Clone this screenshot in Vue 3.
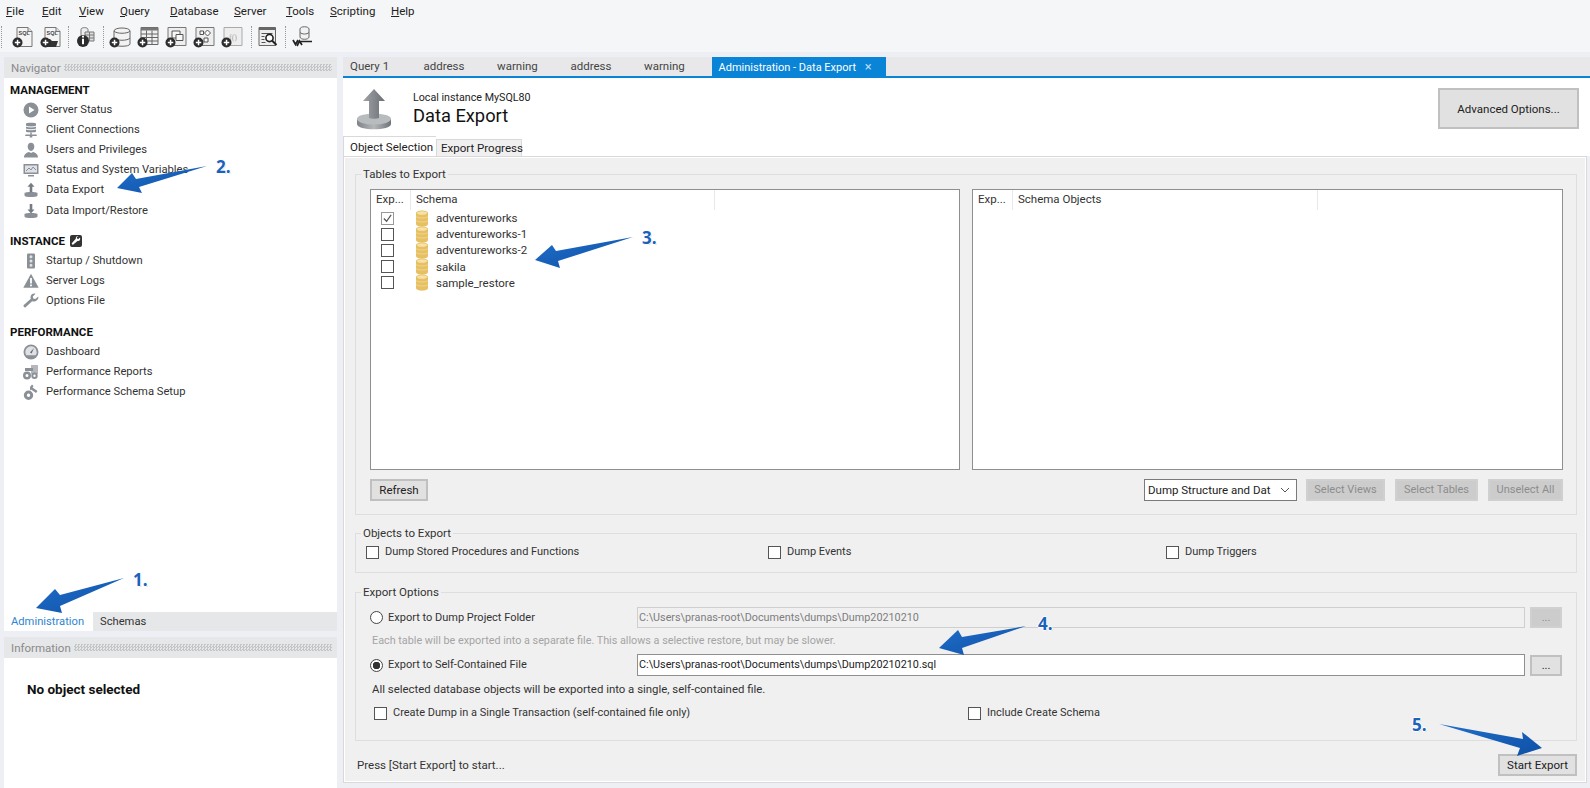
<script setup>
const menus = [['File', 'f1'], ['Edit', 'f2'], ['View', 'f3'], ['Query', 'f4'], ['Database', 'f5'], ['Server', 'f6'], ['Tools', 'f7'], ['Scripting', 'f8'], ['Help', 'f9']]

const G = '#8b9097'
const icons = {
  status: [['M8 .5a7.5 7.5 0 1 0 0 15 7.5 7.5 0 0 0 0-15z', G], ['M6 4.5v7l5.5-3.5z', '#fff']],
  conn: [['M3 1.5C3 .5 13 .5 13 1.5v8c0 1.2-10 1.2-10 0z', G], ['M3 4.2c2 1 8 1 10 0M3 7c2 1 8 1 10 0', 'none', '#fff'], ['M7.3 10.5h1.4v2h5v1.4h-4.4v1.6H6.7v-1.6H2.300v-1.400h5z', G]],
  user: [['M8 .8c2 0 3.300 1.500 3.300 3.700S10 9 8 9 4.700 6.700 4.700 4.500 6 .8 8 .8z', G], ['M1 15.500c0-3.500 3-5 5-5.500l2 1 2-1c2 .5 5 2 5 5.500z', G]],
  vars: [['M.5 2h15v10H.5z', G], ['M2 3.500h12v7H2z', '#dfe1e4'], ['M3 9l3-3 2 2 2-3 3 3', 'none', G], ['M5 13h6v1.500H5z', G]],
  exp: [['M1.500 11c0-1.500 13-1.500 13 0v2.500c0 2-13 2-13 0z', G], ['M8 .8l3.500 4h-2.200v5.400H6.700V4.800H4.500z', '#777b82']],
  imp: [['M1.500 11c0-1.500 13-1.500 13 0v2.500c0 2-13 2-13 0z', G], ['M8 10.400l3.500-4H9.300V1H6.700v5.400H4.500z', '#777b82']],
  start: [['M5 .5h6a1 1 0 0 1 1 1v13a1 1 0 0 1-1 1H5a1 1 0 0 1-1-1v-13a1 1 0 0 1 1-1z', G], ['M8 2.200a1.500 1.500 0 1 0 0 3 1.500 1.500 0 0 0 0-3zM8 6.500a1.500 1.500 0 1 0 0 3 1.500 1.500 0 0 0 0-3zM8 10.800a1.500 1.500 0 1 0 0 3 1.500 1.500 0 0 0 0-3z', '#dfe1e4']],
  logs: [['M8 .8l7.700 14H.3z', G], ['M7.100 5h1.800v5.500H7.100zM7.100 11.500h1.800v1.700H7.100z', '#fff']],
  wrench: [['M15.300 3.500l-3 2.500-2-.6-.5-2 2.700-2.700c-2.500-.8-5 1-5 3.400 0 .6 0 1.100.3 1.600L.8 12c-1 1 .5 3 1.800 2.200l6.500-6c2.800 1.200 6.800-1 6.200-4.700z', G]],
  dash: [['M8 .5a7.500 7.500 0 1 0 0 15 7.500 7.500 0 0 0 0-15z', G], ['M8 2.300a5.700 5.700 0 0 0-5.700 5.700c0 1.300.4 2.400 1.100 3.300h9.200A5.700 5.700 0 0 0 8 2.300z', '#dfe1e4'], ['M7 8.500L11 4l-2.400 5.400z', '#666a70']],
  reports: [['M8 1h7v9H8z', '#b4b7bc'], ['M2 4h8v3H2z', G], ['M4 7.500a4 4 0 1 0 0 8 4 4 0 0 0 0-8zM11.500 8.500a3.200 3.200 0 1 0 0 6.400 3.200 3.200 0 0 0 0-6.400z', G], ['M4 10a1.500 1.500 0 1 0 0 3 1.500 1.500 0 0 0 0-3zM11.500 10.500a1.200 1.200 0 1 0 0 2.400 1.200 1.200 0 0 0 0-2.400z', '#fff']],
  setup: [['M5.500 6.500a4.700 4.700 0 1 0 0 9.400 4.700 4.700 0 0 0 0-9.400z', G], ['M5.500 9.500a1.700 1.700 0 1 0 0 3.400 1.700 1.700 0 0 0 0-3.400z', '#fff'], ['M7 3l2-2.500 1.500 1.500-1 1.500 5 3.500-1.500 2-5-3.500-1 1z', G]],
}

const sections = [
  { title: 'MANAGEMENT', items: [['status', 'Server Status'], ['conn', 'Client Connections'], ['user', 'Users and Privileges'], ['vars', 'Status and System Variables'], ['exp', 'Data Export'], ['imp', 'Data Import/Restore']] },
  { title: 'INSTANCE', badge: true, items: [['start', 'Startup / Shutdown'], ['logs', 'Server Logs'], ['wrench', 'Options File']] },
  { title: 'PERFORMANCE', items: [['dash', 'Dashboard'], ['reports', 'Performance Reports'], ['setup', 'Performance Schema Setup']] },
]

// toolbar: groups split by a dotted separator
const toolbar = [
  ['sql', 'sqlopen'],
  ['info'],
  ['db', 'table', 'view', 'proc', 'func'],
  ['search'],
  ['reconnect'],
]
const withPlus = ['sql', 'sqlopen', 'db', 'table', 'view', 'proc', 'func']

const tabs = ['Query 1', 'address', 'warning', 'address', 'warning']
const schemas = ['adventureworks', 'adventureworks-1', 'adventureworks-2', 'sakila', 'sample_restore']

const arrows = [
  '124,578 60,595 55,589 36,608 62,613 60,606',
  '207,166 136,179 132,173 117,188 142,193 139,187',
  '633,237 556,251 552,245 535,260 560,268 558,261',
  '1026,626 962,637 958,630 939,648 964,655 962,648',
  '1439,724 1523,739 1522,732 1542,748 1517,756 1520,748',
]
const callouts = [
  { n: '1.', cls: 'c1' },
  { n: '2.', cls: 'c2' },
  { n: '3.', cls: 'c3' },
  { n: '4.', cls: 'c4' },
  { n: '5.', cls: 'c5' },
]
</script>

<template>
  <div class="app">
    <div class="menubar">
      <span v-for="m in menus" :key="m[0]" class="menu" :class="m[1]"><u>{{ m[0][0] }}</u>{{ m[0].slice(1) }}</span>
    </div>

    <div class="toolbar">
      <div v-for="(group, i) in toolbar" :key="i" class="tool-group">
        <svg v-for="t in group" :key="t" class="tool" viewBox="0 0 22 22" width="22" height="22">
          <template v-if="t === 'sql' || t === 'sqlopen'">
            <path d="M5 1.500h11l4 4v15H5z" fill="#f4f4f4" stroke="#777" />
            <path d="M16 1.500v4h4" fill="#ddd" stroke="#777" />
            <text x="6.500" y="9" class="tool-txt">SQL</text>
            <path v-if="t === 'sqlopen'" d="M4 13h6l2 2h6l-2 6H4z" fill="#333" />
          </template>
          <template v-if="t === 'info'">
            <path d="M7 3.500c0-2.500 7-2.500 7 0v5c0 2.500-7 2.500-7 0z" fill="#eee" stroke="#777" />
            <path d="M11 6h9v9h-9zM11 9h9M11 12h9M15.500 6v9" fill="#ddd" stroke="#777" />
            <circle cx="9" cy="15" r="6" fill="#2c2c2c" />
            <path d="M8 9.800h2v1.800H8zM8 12.800h2v5.500H8z" fill="#fff" />
          </template>
          <template v-if="t === 'db'">
            <path d="M5 5c0-4 16-4 16 0v13c0 3-16 3-16 0z" fill="#f2f2f2" stroke="#666" />
            <path d="M5 5c2 3 14 3 16 0M5 12c2 3 14 3 16 0" fill="none" stroke="#666" />
          </template>
          <template v-if="t === 'table'">
            <path d="M4 1.500h17v17H4z" fill="#f0f0f0" stroke="#666" />
            <path d="M4 1.500h17v3H4z" fill="#777" />
            <path d="M4 8h17M4 11.500h17M4 15h17M9.500 4.500v14M15 4.500v14" stroke="#666" fill="none" />
          </template>
          <template v-if="t === 'view'">
            <path d="M3 1.500h18v18H3z" fill="#eee" stroke="#777" />
            <path d="M7 5h8v7H7z" fill="#f8f8f8" stroke="#555" />
            <path d="M11 8.500h7v6h-7z" fill="#f8f8f8" stroke="#555" />
          </template>
          <template v-if="t === 'proc'">
            <path d="M3 1.500h18v18H3z" fill="#eee" stroke="#777" />
            <path d="M7 5h3.500v3.500H7zM14.500 4l3 3-3 3-3-3zM11 12h4v4h-4z" fill="#f8f8f8" stroke="#555" />
          </template>
          <template v-if="t === 'func'">
            <path d="M3 1.500h18v18H3z" fill="#eee" stroke="#aaa" />
            <text x="8" y="13.500" class="tool-fn">f()</text>
          </template>
          <template v-if="t === 'search'">
            <path d="M2 1.500h16.500v18H2z" fill="#eee" stroke="#666" />
            <path d="M2 1.500h16.500v2.500H2z" fill="#666" />
            <path d="M4.500 7.500h11M4.500 10.500h3M4.500 13.500h3M4.500 16.500h4" stroke="#555" fill="none" />
            <circle cx="12.500" cy="12" r="3.600" fill="#fff" stroke="#222" stroke-width="1.600" />
            <path d="M15 14.500l4.500 4.500" stroke="#222" stroke-width="2" />
          </template>
          <template v-if="t === 'reconnect'">
            <path d="M9 3c0-3 9-3 9 0v8c0 3-9 3-9 0z" fill="#f2f2f2" stroke="#666" />
            <path d="M9 6.500c2 2 7 2 9 0" fill="none" stroke="#666" />
            <path d="M9 15.500h12M2 14l2.500 4.500L7 14M6 20l2.500-5 2.500 4" stroke="#222" stroke-width="1.700" fill="none" />
          </template>
          <template v-if="withPlus.includes(t)">
            <circle cx="5.500" cy="16.500" r="5" fill="#2c2c2c" />
            <path d="M2.800 15.700h2v-2h1.500v2h2v1.500h-2v2H4.800v-2h-2z" fill="#fff" />
          </template>
        </svg>
      </div>
    </div>

    <div class="main">
      <aside class="side">
        <div class="pane-head"><span>Navigator</span><i class="hatch"></i></div>
        <div class="nav">
          <section v-for="s in sections" :key="s.title" class="nav-sec">
            <h4 class="nav-title">
              {{ s.title }}
              <svg v-if="s.badge" class="nav-badge" viewBox="0 0 12 12" width="12" height="12">
                <rect width="12" height="12" rx="2" fill="#333" />
                <path d="M10 2.500L8.300 4 7 3.500l-.2-1.300L8.500 1C6.800.8 5.500 2 5.800 3.800L2 8c-.8.8.5 2.200 1.300 1.500L7.500 6c2 .6 3.200-1.300 2.500-3.500z" fill="#fff" />
              </svg>
            </h4>
            <div v-for="it in s.items" :key="it[1]" class="nav-item">
              <svg viewBox="0 0 16 16" width="16" height="16">
                <path v-for="(p, i) in icons[it[0]]" :key="i" :d="p[0]" :fill="p[1]" :stroke="p[2] || 'none'" />
              </svg>
              <span>{{ it[1] }}</span>
            </div>
          </section>
        </div>
        <div class="side-tabs">
          <span class="side-tab on">Administration</span>
          <span class="side-tab">Schemas</span>
        </div>
        <div class="pane-head info-head"><span>Information</span><i class="hatch"></i></div>
        <div class="info">No object selected</div>
      </aside>

      <div class="work">
        <div class="tabs">
          <span v-for="(t, i) in tabs" :key="i" class="tab">{{ t }}</span>
          <span class="tab active">Administration - Data Export <b class="x">×</b></span>
        </div>

        <header class="head">
          <svg class="head-icon" viewBox="0 0 36 42" width="36" height="42">
            <defs>
              <linearGradient id="disk" x1="0" x2="1" y1="0" y2="0">
                <stop offset="0" stop-color="#7f8388" />
                <stop offset=".5" stop-color="#b4b7ba" />
                <stop offset="1" stop-color="#6f7378" />
              </linearGradient>
              <linearGradient id="up" x1="0" x2="1" y1="0" y2="0">
                <stop offset="0" stop-color="#a0a3a6" />
                <stop offset="1" stop-color="#6b6f74" />
              </linearGradient>
            </defs>
            <path d="M1 32c0-7 34-7 34 0v4c0 7-34 7-34 0z" fill="url(#disk)" />
            <ellipse cx="18" cy="31" rx="17" ry="5.500" fill="#b9bcbf" />
            <path d="M18 1l11 12h-6v17c-2 1-8 1-10 0V13H7z" fill="url(#up)" />
          </svg>
          <div class="head-text">
            <div class="head-sub">Local instance MySQL80</div>
            <h1 class="head-title">Data Export</h1>
          </div>
          <button class="btn adv">Advanced Options...</button>
        </header>

        <div class="subtabs">
          <span class="subtab on">Object Selection</span>
          <span class="subtab">Export Progress</span>
        </div>

        <div class="panel">
          <fieldset class="group">
            <legend>Tables to Export</legend>
            <div class="lists">
              <div class="list">
                <div class="list-head">
                  <span class="col-a">Exp...</span><span class="col-b">Schema</span>
                </div>
                <div v-for="(s, i) in schemas" :key="s" class="row">
                  <span class="check in-list" :class="{ checked: i === 0 }">
                    <svg v-if="i === 0" viewBox="0 0 12 12" width="11" height="11">
                      <path d="M2 6l3 3 5-7" fill="none" stroke="#555" stroke-width="1.300" />
                    </svg>
                  </span>
                  <svg class="db" viewBox="0 0 14 17" width="14" height="17">
                    <path d="M1 3c0-3.500 12-3.500 12 0v11c0 3.500-12 3.500-12 0z" fill="#e6c063" />
                    <ellipse cx="7" cy="3" rx="5" ry="1.800" fill="#f5e2a8" />
                    <path d="M1 6.500c2 2 10 2 12 0M1 10.500c2 2 10 2 12 0" fill="none" stroke="#f3dc9c" stroke-width=".8" />
                  </svg>
                  <span>{{ s }}</span>
                </div>
              </div>
              <div class="list">
                <div class="list-head">
                  <span class="col-a">Exp...</span><span class="col-b wide">Schema Objects</span>
                </div>
              </div>
            </div>
            <div class="list-actions">
              <button class="btn refresh">Refresh</button>
              <div class="select">
                <span>Dump Structure and Dat</span>
                <svg viewBox="0 0 10 6" width="10" height="6"><path d="M1 1l4 4 4-4" fill="none" stroke="#555" /></svg>
              </div>
              <button class="btn off sv">Select Views</button>
              <button class="btn off st">Select Tables</button>
              <button class="btn off ua">Unselect All</button>
            </div>
          </fieldset>

          <fieldset class="group objects">
            <legend>Objects to Export</legend>
            <div class="obj-row">
              <label class="opt o1"><span class="check"></span>Dump Stored Procedures and Functions</label>
              <label class="opt o2"><span class="check"></span>Dump Events</label>
              <label class="opt"><span class="check"></span>Dump Triggers</label>
            </div>
          </fieldset>

          <fieldset class="group options">
            <legend>Export Options</legend>
            <div class="path-row">
              <label class="radio-label"><span class="radio"></span>Export to Dump Project Folder</label>
              <div class="path disabled">C:\Users\pranas-root\Documents\dumps\Dump20210210</div>
              <button class="btn off more">...</button>
            </div>
            <p class="hint muted">Each table will be exported into a separate file. This allows a selective restore, but may be slower.</p>
            <div class="path-row second">
              <label class="radio-label"><span class="radio sel"></span>Export to Self-Contained File</label>
              <div class="path">C:\Users\pranas-root\Documents\dumps\Dump20210210.sql</div>
              <button class="btn more">...</button>
            </div>
            <p class="hint">All selected database objects will be exported into a single, self-contained file.</p>
            <div class="obj-row last">
              <label class="opt o3"><span class="check"></span>Create Dump in a Single Transaction (self-contained file only)</label>
              <label class="opt"><span class="check"></span>Include Create Schema</label>
            </div>
          </fieldset>

          <div class="foot">
            <span>Press [Start Export] to start...</span>
            <button class="btn start">Start Export</button>
          </div>
        </div>
      </div>
    </div>

    <!-- tutorial annotations drawn on top of the window -->
    <svg class="marks" viewBox="0 0 1590 788" width="1590" height="788">
      <defs>
        <linearGradient id="arrow" x1="0" x2="1" y1="0" y2="1">
          <stop offset="0" stop-color="#1f6fc9" />
          <stop offset="1" stop-color="#0f4fa6" />
        </linearGradient>
      </defs>
      <polygon v-for="a in arrows" :key="a" :points="a" fill="url(#arrow)" />
    </svg>
    <span v-for="c in callouts" :key="c.n" class="callout" :class="c.cls">{{ c.n }}</span>
  </div>
</template>

<style>
html, body { margin: 0; background: #eeeff4; }
</style>

<style scoped>
.app {
  position: relative;
  width: 1590px;
  height: 788px;
  overflow: hidden;
  display: flex;
  flex-direction: column;
  background: #eeeff4;
  color: #222;
  font-family: Roboto, "Noto Sans", sans-serif;
  font-size: 11.500px;
  line-height: 14px;
}

.menubar {
  height: 21px;
  flex: none;
  display: flex;
  align-items: center;
  padding-left: 6px;
  background: #f5f6f7;
  font-size: 11.500px;
}
.f1 { width: 36px; }
.f2 { width: 37px; }
.f3 { width: 41px; }
.f4 { width: 50px; }
.f5 { width: 64px; }
.f6 { width: 52px; }
.f7 { width: 44px; }
.f8 { width: 61px; }

.toolbar {
  height: 31px;
  flex: none;
  display: flex;
  align-items: center;
  padding-left: 1px;
  background: #f5f6f7;
}
.tool-group {
  display: flex;
  gap: 6px;
  padding: 0 6px 0 5px;
  border-left: 1px dotted #999;
  height: 22px;
}
.tool-group:first-child { padding-left: 10px; }
.tool-group:nth-child(2) { padding-right: 7px; }
.tool-group:nth-child(3) { padding-right: 8px; }
.tool-txt { font: bold 5.500px "Liberation Sans", sans-serif; fill: #444; }
.tool-fn { font: 8px "Liberation Serif", serif; fill: #aaa; }

.main {
  flex: 1;
  min-height: 0;
  display: flex;
  padding-top: 5px;
}

.side {
  width: 333px;
  margin-left: 4px;
  flex: none;
  display: flex;
  flex-direction: column;
}
.pane-head {
  height: 21px;
  flex: none;
  display: flex;
  align-items: center;
  gap: 3px;
  padding: 0 5px 0 7px;
  background: #e6e7e9;
  color: #8a8a8a;
}
.hatch {
  flex: 1;
  height: 7px;
  background: repeating-conic-gradient(#c4c5c7 0 25%, transparent 0 50%) 0 0 / 3px 3px;
}
.nav {
  height: 534px;
  flex: none;
  padding: 1px 6px 0;
  background: #fff;
  box-sizing: border-box;
}
.nav-sec { margin-bottom: 9.600px; }
.nav-title {
  margin: 0;
  height: 21px;
  font-size: 11.500px;
  font-weight: 700;
  color: #111;
  display: flex;
  align-items: center;
  gap: 5px;
}
.nav-item {
  height: 20.100px;
  display: flex;
  align-items: center;
  gap: 7px;
  padding-left: 13px;
  color: #333;
  font-size: 11.200px;
}
.side-tabs {
  height: 19px;
  flex: none;
  display: flex;
  background: #e6e7e9;
  font-size: 11.200px;
}
.side-tab {
  display: flex;
  align-items: center;
  padding: 0 7px;
  color: #333;
}
.side-tab.on {
  width: 89px;
  box-sizing: border-box;
  background: #fff;
  color: #2f85cf;
}
.info-head { margin-top: 6px; }
.info {
  flex: 1;
  background: #fff;
  padding: 24px 23px 0;
  font-size: 13.500px;
  font-weight: 700;
  color: #111;
}

.work {
  flex: 1;
  min-width: 0;
  margin-left: 6px;
  display: flex;
  flex-direction: column;
}
.tabs {
  height: 19px;
  flex: none;
  display: flex;
  background: #e8e8ea;
  border-bottom: 2px solid #0a84d6;
}
.tab {
  width: 73.500px;
  box-sizing: border-box;
  padding-left: 7px;
  line-height: 19px;
  color: #444;
}
.tab.active {
  width: 174px;
  margin-left: 1px;
  background: #0a84d6;
  color: #fff;
  white-space: nowrap;
  font-size: 11px;
}
.x { font-weight: 400; font-size: 13px; margin-left: 6px; color: #b9dcf5; }

.head {
  height: 58px;
  box-sizing: border-box;
  flex: none;
  display: flex;
  align-items: center;
  background: #fff;
  padding: 3px 11px 0 13px;
}
.head-text { margin-left: 21px; flex: 1; }
.head-sub { line-height: 14px; font-size: 10.700px; }
.head-title {
  margin: 0;
  font-size: 18.300px;
  line-height: 22px;
  font-weight: 400;
  color: #111;
}
.btn {
  box-sizing: border-box;
  display: block;
  margin: 0;
  padding: 0;
  border: 2px solid #c0c0c0;
  background: #e1e1e1;
  color: #222;
  font: inherit;
  text-align: center;
}
.adv { width: 141px; height: 41px; }
.btn.off { background: #cccccc; border-color: #d0d0d0; color: #8c8c8c; font-size: 11px; }

.subtabs {
  height: 20px;
  flex: none;
  display: flex;
  align-items: flex-end;
  background: #fff;
}
.subtab {
  height: 17px;
  line-height: 17px;
  width: 86px;
  box-sizing: border-box;
  padding-left: 4px;
  background: #f0f0f0;
  border: 1px solid #d9d9d9;
  border-bottom: none;
  white-space: nowrap;
}
.subtab.on {
  width: 93px;
  height: 20px;
  line-height: 20px;
  padding-left: 6px;
  background: #fff;
  border-right: none;
}

.panel {
  height: 627px;
  flex: none;
  width: 1244px;
  box-sizing: border-box;
  padding: 10px 9px 0 11px;
  background: #f0f0f0;
  border: 1px solid #d9d9d9;
  box-shadow: inset 0 0 0 1px #fff;
}
.group {
  margin: 0;
  padding: 8px 13px 13px 14px;
  border: 1px solid #dedede;
  min-width: 0;
}
.group legend {
  padding: 0 2px;
  margin-left: -9px;
  line-height: 14px;
  color: #333;
}
.lists {
  display: grid;
  grid-template-columns: 590px 591px;
  gap: 12px;
}
.list {
  height: 281px;
  box-sizing: border-box;
  background: #fff;
  border: 1px solid #8f8f8f;
}
.list-head {
  display: flex;
  height: 20px;
  line-height: 19px;
  color: #333;
}
.col-a { width: 40px; box-sizing: border-box; padding-left: 5px; border-right: 1px solid #e8e8e8; flex: none; }
.col-b { width: 304px; box-sizing: border-box; padding-left: 5px; border-right: 1px solid #e8e8e8; flex: none; }
.col-b.wide { width: 305px; }
.row {
  height: 16.200px;
  display: flex;
  align-items: center;
  color: #333;
}
.check {
  width: 13px;
  height: 13px;
  box-sizing: border-box;
  border: 1px solid #555;
  background: #fff;
  display: inline-flex;
  align-items: center;
  justify-content: center;
  flex: none;
}
.check.in-list { margin: 0 21px 0 10px; }
.check.checked { border-color: #999; }
.db { margin-right: 7px; flex: none; }

.list-actions {
  display: flex;
  align-items: center;
  margin-top: 9px;
  height: 22px;
  color: #222;
}
.refresh { width: 58px; height: 22px; margin-right: auto; }
.select {
  width: 153px;
  height: 22px;
  box-sizing: border-box;
  border: 1px solid #7a7a7a;
  background: #fff;
  display: flex;
  align-items: center;
  justify-content: space-between;
  padding: 0 6px 0 3px;
  margin-right: 9px;
}
.sv { width: 79px; height: 22px; margin-right: 10px; }
.st { width: 83px; height: 22px; margin-right: 10px; }
.ua { width: 75px; height: 22px; }

.objects { margin-top: 11px; padding: 2px 10px 10px 10px; }
.objects legend { margin-left: -5px; }
.obj-row { display: flex; align-items: center; height: 20px; color: #333; font-size: 11px; }
.opt { display: flex; align-items: center; gap: 6px; }
.o1 { width: 402px; }
.o2 { width: 398px; }
.o3 { width: 594px; }

.options { margin-top: 12px; padding: 8px 14px 17px 14px; }
.path-row { display: flex; align-items: center; height: 21px; color: #333; font-size: 11px; }
.path-row.second { height: 22px; }
.radio-label { width: 267px; display: flex; align-items: center; gap: 5px; flex: none; }
.radio {
  width: 13px;
  height: 13px;
  box-sizing: border-box;
  border-radius: 50%;
  border: 1px solid #444;
  background: #fff;
  position: relative;
}
.radio.sel { background: radial-gradient(circle, #333 0 3.500px, #fff 4px); }
.path {
  flex: 1;
  height: 100%;
  box-sizing: border-box;
  border: 1px solid #8f8f8f;
  background: #fff;
  padding-left: 1px;
  line-height: 19px;
  color: #222;
  font-size: 10.800px;
}
.path.disabled { background: #f0f0f0; border-color: #cfcfcf; color: #7d7d7d; }
.more { width: 32px; height: 21px; margin-left: 5px; line-height: 17px; flex: none; }
.hint { margin: 0; height: 26px; line-height: 26px; padding-left: 2px; color: #333; font-size: 11.400px; }
.hint.muted { color: #a4a4a4; font-size: 10.800px; }
.obj-row.last { margin-top: 1px; padding-left: 4px; }

.foot {
  display: flex;
  align-items: center;
  justify-content: space-between;
  margin-top: 13px;
  padding-left: 2px;
  color: #333;
}
.start { width: 79px; height: 22px; }

.marks { position: absolute; left: 0; top: 0; pointer-events: none; }
.callout {
  position: absolute;
  font-family: "Open Sans", sans-serif;
  font-size: 17px;
  line-height: 20px;
  font-weight: 700;
  color: #1a62bb;
  text-shadow: 1px 0 #fff, -1px 0 #fff, 0 1px #fff, 0 -1px #fff, 1px 1px #d8d8d8;
}
.c1 { left: 133px; top: 570px; }
.c2 { left: 216px; top: 157px; }
.c3 { left: 642px; top: 228px; }
.c4 { left: 1038px; top: 614px; }
.c5 { left: 1412px; top: 715px; }
</style>
